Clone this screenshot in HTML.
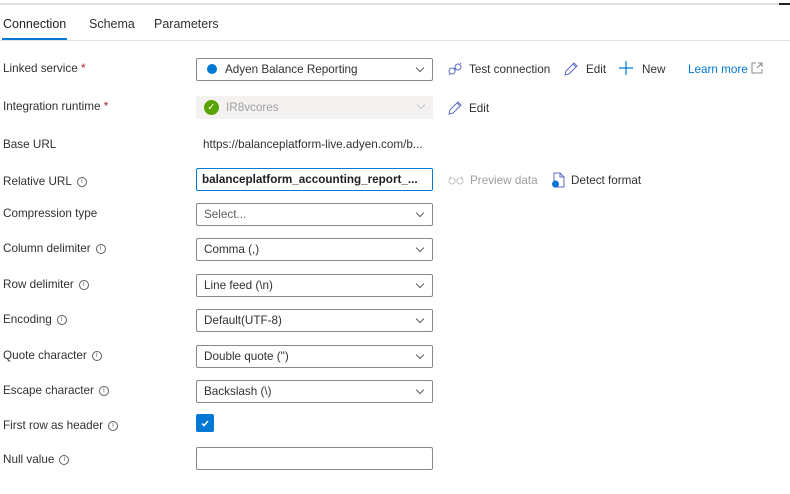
<!DOCTYPE html>
<html><head><style>
body{margin:0;width:790px;height:494px;background:#fff;font-family:"Segoe UI","Liberation Sans",sans-serif;font-size:11.7px;color:#323130;position:relative;overflow:hidden}
.a{position:absolute;white-space:nowrap}
.lbl{left:3px}
.inp{position:absolute;left:196px;width:235px;height:21px;border:1px solid #8a8886;border-radius:2px;box-sizing:content-box}
.inp span{position:absolute;left:7px;top:4px}
.chev{position:absolute;right:9px;top:6px;width:5px;height:5px;border-right:1px solid #605e5c;border-bottom:1px solid #605e5c;transform:rotate(45deg)}
.info{display:inline-block;width:8px;height:8px;border:1px solid #605e5c;border-radius:50%;font-size:7px;line-height:8px;text-align:center;margin-left:5px;vertical-align:2px;color:#605e5c}
.req{color:#a4262c}
svg{position:absolute}
</style></head><body>
<div class="a" style="left:0;top:3px;width:779px;height:2px;background:#e1e1e1"></div>
<div class="a" style="left:779px;top:3px;width:11px;height:2px;background:#222"></div>
<div class="a" style="left:0;top:40px;width:790px;height:1px;background:#e1e1e1"></div>
<div class="a" style="left:3px;top:17px;font-size:12.5px;color:#201f1e">Connection</div>
<div class="a" style="left:2px;top:38px;width:65px;height:2px;background:#0078d4"></div>
<div class="a" style="left:89px;top:17px;font-size:12.5px">Schema</div>
<div class="a" style="left:154px;top:17px;font-size:12.5px">Parameters</div>

<div class="a lbl" style="top:62px">Linked service <span class="req">*</span></div>
<div class="inp" style="top:58px"><span style="left:10px;top:5px;width:10px;height:10px;border-radius:50%;background:#0078d4"></span><span style="left:28px">Adyen Balance Reporting</span><div class="chev"></div></div>
<svg style="left:447px;top:61px" width="16" height="16" viewBox="0 0 16 16" fill="none" stroke="#5c6bc0" stroke-width="1"><circle cx="5" cy="10" r="3"/><circle cx="11" cy="6" r="3"/><path d="M2 14l1-1M14 2l-1 1M7 7l2 2"/></svg>
<div class="a" style="left:469px;top:63px">Test connection</div>
<svg style="left:563px;top:61px" width="16" height="16" viewBox="0 0 16 16" fill="none" stroke="#5c6bc0" stroke-width="1"><path d="M2 14l1-4 8-8 3 3-8 8z M10 3l3 3"/></svg>
<div class="a" style="left:586px;top:63px">Edit</div>
<svg style="left:619px;top:61px" width="14" height="14" viewBox="0 0 14 14" stroke="#0078d4" stroke-width="1.2"><path d="M7 0v14M0 7h14"/></svg>
<div class="a" style="left:642px;top:63px">New</div>
<div class="a" style="left:688px;top:63px;color:#0078d4">Learn more</div>
<svg style="left:751px;top:62px" width="12" height="12" viewBox="0 0 12 12" fill="none" stroke="#8a8886"><path d="M5 1H1v10h10V7M7 1h4v4M11 1L6 6"/></svg>

<div class="a lbl" style="top:100px">Integration runtime <span class="req">*</span></div>
<div class="a" style="left:196px;top:96px;width:237px;height:23px;background:#f3f2f1"><span class="a" style="left:8px;top:4px;width:15px;height:15px;border-radius:50%;background:#57a300;color:#fff;font-size:10px;line-height:15px;text-align:center">✓</span><span class="a" style="left:30px;top:5px;color:#a19f9d">IR8vcores</span><div class="chev" style="border-color:#c8c6c4"></div></div>
<svg style="left:447px;top:100px" width="16" height="16" viewBox="0 0 16 16" fill="none" stroke="#5c6bc0" stroke-width="1"><path d="M2 14l1-4 8-8 3 3-8 8z M10 3l3 3"/></svg>
<div class="a" style="left:469px;top:102px">Edit</div>

<div class="a lbl" style="top:138px">Base URL</div>
<div class="a" style="left:203px;top:138px">https://balanceplatform-live.adyen.com/b...</div>

<div class="a lbl" style="top:175px">Relative URL<span class="info">i</span></div>
<div class="inp" style="top:168px;border-color:#0078d4"><span style="left:5px;font-weight:600;color:#201f1e">balanceplatform_accounting_report_...</span></div>
<svg style="left:448px;top:175px" width="16" height="10" viewBox="0 0 16 10" fill="none" stroke="#c8c6c4"><circle cx="4" cy="6" r="3"/><circle cx="12" cy="6" r="3"/><path d="M7 5h2M1 5l2-4M15 5l-2-4"/></svg>
<div class="a" style="left:470px;top:174px;color:#a19f9d">Preview data</div>
<svg style="left:551px;top:172px" width="14" height="16" viewBox="0 0 14 16" fill="none" stroke="#5c6bc0"><path d="M3 1h6l4 4v10H3z M9 1v4h4"/><circle cx="4.5" cy="12" r="3.5" fill="#0078d4" stroke="none"/></svg>
<div class="a" style="left:571px;top:174px">Detect format</div>

<div class="a lbl" style="top:207px">Compression type</div>
<div class="inp" style="top:203px"><span style="color:#605e5c">Select...</span><div class="chev"></div></div>

<div class="a lbl" style="top:242px">Column delimiter<span class="info">i</span></div>
<div class="inp" style="top:238px"><span>Comma (,)</span><div class="chev"></div></div>

<div class="a lbl" style="top:278px">Row delimiter<span class="info">i</span></div>
<div class="inp" style="top:274px"><span>Line feed (\n)</span><div class="chev"></div></div>

<div class="a lbl" style="top:313px">Encoding<span class="info">i</span></div>
<div class="inp" style="top:309px"><span>Default(UTF-8)</span><div class="chev"></div></div>

<div class="a lbl" style="top:349px">Quote character<span class="info">i</span></div>
<div class="inp" style="top:345px"><span>Double quote (")</span><div class="chev"></div></div>

<div class="a lbl" style="top:384px">Escape character<span class="info">i</span></div>
<div class="inp" style="top:380px"><span>Backslash (\)</span><div class="chev"></div></div>

<div class="a lbl" style="top:419px">First row as header<span class="info">i</span></div>
<div class="a" style="left:196px;top:414px;width:18px;height:18px;background:#0078d4;border-radius:2px"></div>
<svg style="left:196px;top:414px" width="18" height="18" viewBox="0 0 18 18" fill="none" stroke="#fff" stroke-width="1.5"><path d="M6 9.5l2 2 4-4.5"/></svg>

<div class="a lbl" style="top:453px">Null value<span class="info">i</span></div>
<div class="inp" style="top:447px"></div>
</body></html>
